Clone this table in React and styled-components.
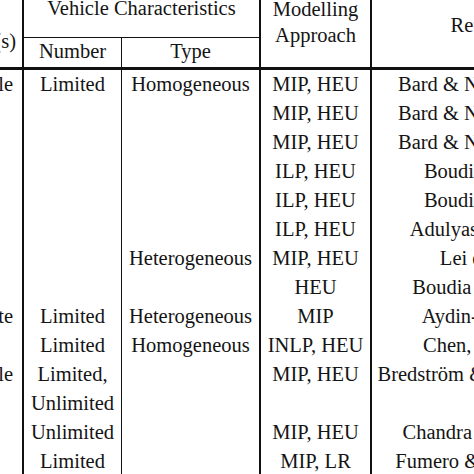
import React from 'react'
import styled, { createGlobalStyle } from 'styled-components'

const GlobalStyle = createGlobalStyle`
  html, body {
    margin: 0;
    padding: 0;
    background: #fff;
  }
  body {
    width: 474px;
    height: 474px;
    overflow: hidden;
  }
`

const Frame = styled.div`
  width: 474px;
  height: 474px;
  overflow: hidden;
  background: #fff;
`

const Table = styled.div`
  display: grid;
  grid-template-columns: 100px 98px 139px 111px 208px;
  grid-template-rows: 59px 32px repeat(14, 29px);
  margin: -21px 0 0 -76px;
  font-family: 'Liberation Serif', 'Times New Roman', serif;
  font-size: 20.5px;
  color: #141414;
`

const rightBorder = {
  0: '2px',
  1: '1px',
  2: '2px',
  3: '2px',
  4: '0px',
}

const Cell = styled.div`
  box-sizing: border-box;
  display: flex;
  align-items: center;
  justify-content: center;
  flex-direction: column;
  white-space: nowrap;
  line-height: ${(p) => (p.$head ? '26px' : '29px')};
  border-right: ${(p) => p.$right || rightBorder[p.$col]} solid #111;
  border-bottom: ${(p) => p.$bottom || '0px'} solid #111;
  padding: ${(p) => p.$pad || '0'};
  grid-column: ${(p) => p.$col + 1} / span ${(p) => p.$span || 1};
  grid-row: ${(p) => p.$row} / span ${(p) => p.$rows || 1};
  text-align: center;
`

const EdgeCell = styled(Cell)`
  align-items: flex-end;
  text-align: right;
`

const Line = styled.span`
  display: block;
  padding-right: ${(p) => p.$indent || 0}px;
`

const rows = [
  ['Multiple', 'Limited', 'Homogeneous', 'MIP, HEU', 'Bard & Nananukul'],
  ['', '', '', 'MIP, HEU', 'Bard & Nananukul'],
  ['', '', '', 'MIP, HEU', 'Bard & Nananukul'],
  ['', '', '', 'ILP, HEU', 'Boudia et al.'],
  ['', '', '', 'ILP, HEU', 'Boudia et al.'],
  ['', '', '', 'ILP, HEU', 'Adulyasak et al.'],
  ['', '', 'Heterogeneous', 'MIP, HEU', 'Lei et al.'],
  ['', '', '', 'HEU', 'Boudia & Prins'],
  ['Route', 'Limited', 'Heterogeneous', 'MIP', 'Aydin-Kesici'],
  ['', 'Limited', 'Homogeneous', 'INLP, HEU', 'Chen, Hsueh'],
  ['Multiple', 'Limited,', '', 'MIP, HEU', 'Bredström & Rönnqvist'],
  ['', 'Unlimited', '', '', ''],
  ['', 'Unlimited', '', 'MIP, HEU', 'Chandra & Fisher'],
  ['', 'Limited', '', 'MIP, LR', 'Fumero & Vercellis'],
]

export default function App() {
  return (
    <Frame>
      <GlobalStyle />
      <Table>
        <EdgeCell $col={0} $row={1} $rows={2} $head $bottom="3px" $pad="10px 6px 0 0">
          <Line $indent={40}>Planning</Line>
          <Line>Period(s)</Line>
        </EdgeCell>
        <Cell $col={1} $span={2} $row={1} $head $bottom="1px" $right="2px">
          Vehicle Characteristics
        </Cell>
        <Cell $col={3} $row={1} $rows={2} $head $bottom="3px" $pad="0 0 2px 0">
          <Line>Modelling</Line>
          <Line>Approach</Line>
        </Cell>
        <Cell $col={4} $row={1} $rows={2} $head $bottom="3px" $pad="4px 0 0 40px">
          References
        </Cell>
        <Cell $col={1} $row={2} $bottom="3px" $pad="0 0 2px 0">
          Number
        </Cell>
        <Cell $col={2} $row={2} $bottom="3px" $pad="0 0 2px 0">
          Type
        </Cell>

        {rows.map((r, i) =>
          r.map((text, c) =>
            c === 0 ? (
              <EdgeCell key={`${i}-${c}`} $col={0} $row={i + 3} $pad="0 9px 1px 0">
                {text}
              </EdgeCell>
            ) : (
              <Cell key={`${i}-${c}`} $col={c} $row={i + 3} $pad="0 0 1px 0">
                {text}
              </Cell>
            )
          )
        )}
      </Table>
    </Frame>
  )
}
